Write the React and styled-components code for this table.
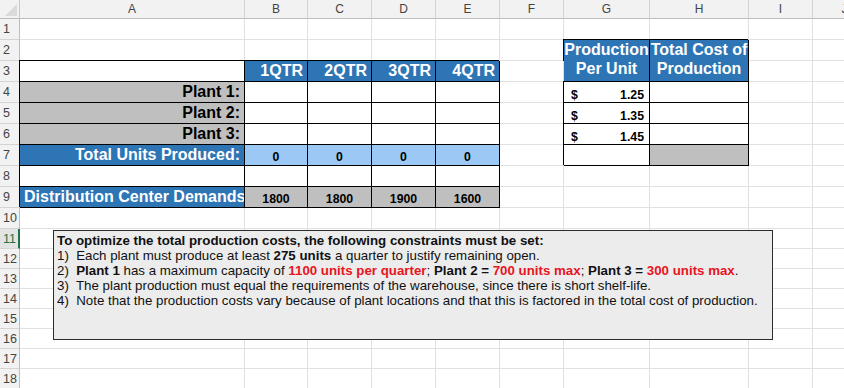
import React from "react";
import styled, { createGlobalStyle } from "styled-components";

const blue = "#2e75b6";
const gray = "#bfbfbf";
const sky = "#9cc8f5";
const gridLine = "#e1e1e1";

const widths = [225, 63, 64, 64, 64, 64, 86, 99, 64, 64];
const letters = ["A", "B", "C", "D", "E", "F", "G", "H", "I", "J"];
const SKIP = "skip";

const variants = {
	blank: {},
	white: { $boxed: true },
	quarter: { $boxed: true, $bg: blue, $color: "#fff", $size: 16, $bold: true, $align: "flex-end" },
	plant: { $boxed: true, $bg: gray, $size: 16, $bold: true, $align: "flex-end" },
	total: { $boxed: true, $bg: blue, $color: "#fff", $size: 16, $bold: true, $align: "flex-end" },
	units: { $boxed: true, $bg: sky, $size: 12.3, $bold: true, $align: "center" },
	demandLabel: { $boxed: true, $bg: blue, $color: "#fff", $size: 16, $bold: true, $align: "flex-start" },
	demand: { $boxed: true, $bg: gray, $size: 12.3, $bold: true, $align: "center" },
	grayBox: { $boxed: true, $bg: gray },
};

const quarters = { B: "1QTR", C: "2QTR", D: "3QTR", E: "4QTR" };
const fill = (kind, v) =>
	Object.fromEntries(Object.keys(quarters).map((k) => [k, { kind, v }]));

// one object per sheet row, keyed by column letter
const sheetRows = [
	{},
	{
		G: { kind: "stack", lines: ["Production", "Per Unit"] },
		H: { kind: "stack", lines: ["Total Cost of", "Production"] },
	},
	{
		A: { kind: "white" },
		...Object.fromEntries(Object.entries(quarters).map(([k, v]) => [k, { kind: "quarter", v }])),
		G: SKIP,
		H: SKIP,
	},
	{ A: { kind: "plant", v: "Plant 1:" }, ...fill("white"), G: { kind: "price", v: "1.25" }, H: { kind: "white" } },
	{ A: { kind: "plant", v: "Plant 2:" }, ...fill("white"), G: { kind: "price", v: "1.35" }, H: { kind: "white" } },
	{ A: { kind: "plant", v: "Plant 3:" }, ...fill("white"), G: { kind: "price", v: "1.45" }, H: { kind: "white" } },
	{ A: { kind: "total", v: "Total Units Produced:" }, ...fill("units", "0"), G: { kind: "white" }, H: { kind: "grayBox" } },
	{ A: { kind: "white" }, ...fill("white") },
	{
		A: { kind: "demandLabel", v: "Distribution Center Demands" },
		B: { kind: "demand", v: "1800" },
		C: { kind: "demand", v: "1800" },
		D: { kind: "demand", v: "1900" },
		E: { kind: "demand", v: "1600" },
	},
	{},
	{},
	{},
	{},
	{},
	{},
	{},
	{},
	{},
];

const ACTIVE_ROW = 11;

const App = () => {
	return (
		<>
			<GlobalStyle />
			<Sheet>
				<Corner>
					<svg width="12" height="12" viewBox="0 0 12 12">
						<polygon points="12,0 12,12 0,12" fill="#dadada" />
					</svg>
				</Corner>
				{letters.map((l) => (
					<ColHead key={l}>{l}</ColHead>
				))}

				{sheetRows.map((row, i) => {
					const n = i + 1;
					return (
						<React.Fragment key={n}>
							<RowHead $active={n === ACTIVE_ROW}>{n}</RowHead>
							{letters.map((l) => {
								const cell = row[l];
								if (cell === SKIP) return null;
								const key = `${l}${n}`;
								if (!cell) return <Cell key={key} />;
								if (cell.kind === "stack")
									return (
										<StackCell key={key} $boxed $bg={blue}>
											{cell.lines.map((t) => (
												<span key={t}>{t}</span>
											))}
										</StackCell>
									);
								if (cell.kind === "price")
									return (
										<PriceCell key={key} $boxed $size={12.3} $bold>
											<span>$</span>
											<span>{cell.v}</span>
										</PriceCell>
									);
								return (
									<Cell key={key} {...variants[cell.kind]}>
										{cell.v}
									</Cell>
								);
							})}
						</React.Fragment>
					);
				})}

				<Note>
					<NoteLine>
						<B>To optimize the total production costs, the following constraints must be set:</B>
					</NoteLine>
					<NoteLine>
						1)  Each plant must produce at least <B>275 units</B> a quarter to justify remaining open.
					</NoteLine>
					<NoteLine>
						2)  <B>Plant 1</B> has a maximum capacity of <Red>1100 units per quarter</Red>;{" "}
						<B>Plant 2 = </B>
						<Red>700 units max</Red>; <B>Plant 3 = </B>
						<Red>300 units max</Red>.
					</NoteLine>
					<NoteLine>
						3)  The plant production must equal the requirements of the warehouse, since there is short shelf-life.
					</NoteLine>
					<NoteLine>
						4)  Note that the production costs vary because of plant locations and that this is factored in the total cost of production.
					</NoteLine>
				</Note>
			</Sheet>
		</>
	);
};

export default App;

const GlobalStyle = createGlobalStyle`
	body {
		margin: 0;
		background: #fff;
		overflow: hidden;
		font-family: "Liberation Sans", Arial, sans-serif;
	}
`;

const Sheet = styled.div`
	position: relative;
	display: grid;
	grid-template-columns: 20px ${widths.map((w) => `${w}px`).join(" ")};
	grid-template-rows: 19px repeat(10, 21px) repeat(8, 20px);
	width: max-content;
`;

const Corner = styled.div`
	display: flex;
	align-items: flex-end;
	justify-content: flex-end;
	padding: 0 2px 2px 0;
	background: #f2f2f2;
	border-right: 1px solid #c8c8c8;
	border-bottom: 1px solid #bdbdbd;
	box-sizing: border-box;
`;

const ColHead = styled.div`
	display: flex;
	align-items: center;
	justify-content: center;
	background: #f2f2f2;
	border-right: 1px solid #d4d4d4;
	border-bottom: 1px solid #bdbdbd;
	box-sizing: border-box;
	font-size: 12px;
	color: #444;
`;

const RowHead = styled.div`
	display: flex;
	align-items: center;
	padding-left: 3px;
	background: ${(p) => (p.$active ? "#e3e3e3" : "#f2f2f2")};
	border-right: ${(p) => (p.$active ? "2px solid #217346" : "1px solid #bdbdbd")};
	border-bottom: 1px solid #d4d4d4;
	box-sizing: border-box;
	font-size: 12.5px;
	color: ${(p) => (p.$active ? "#217346" : "#444")};
`;

const Cell = styled.div`
	display: flex;
	align-items: flex-end;
	justify-content: ${(p) => p.$align || "flex-start"};
	padding: 0 4px 1px;
	box-sizing: border-box;
	min-width: 0;
	white-space: nowrap;
	background: ${(p) => p.$bg || "#fff"};
	color: ${(p) => p.$color || "#000"};
	font-size: ${(p) => p.$size || 12}px;
	font-weight: ${(p) => (p.$bold ? 700 : 400)};
	border-right: 1px solid ${(p) => (p.$boxed ? "#000" : gridLine)};
	border-bottom: 1px solid ${(p) => (p.$boxed ? "#000" : gridLine)};
	box-shadow: ${(p) => (p.$boxed ? "-1px -1px 0 #000" : "none")};
`;

const StackCell = styled(Cell)`
	grid-row: span 2;
	flex-direction: column;
	justify-content: center;
	align-items: center;
	padding: 0 0 3px;
	overflow: hidden;
	color: #fff;
	font-size: 16px;
	font-weight: 700;
	line-height: 19px;
`;

const PriceCell = styled(Cell)`
	justify-content: space-between;
	padding: 0 5px 0 7px;
`;

const Note = styled.div`
	position: absolute;
	left: 53px;
	top: 230px;
	width: 720px;
	height: 110px;
	box-sizing: border-box;
	padding: 2px 3px;
	background: #ececec;
	border: 1px solid #2b2b2b;
	font-size: 13.3px;
	line-height: 15px;
	color: #111;
`;

const NoteLine = styled.div`
	white-space: pre;
`;

const B = styled.b`
	font-weight: 700;
`;

const Red = styled.b`
	font-weight: 700;
	color: #e8141e;
`;
